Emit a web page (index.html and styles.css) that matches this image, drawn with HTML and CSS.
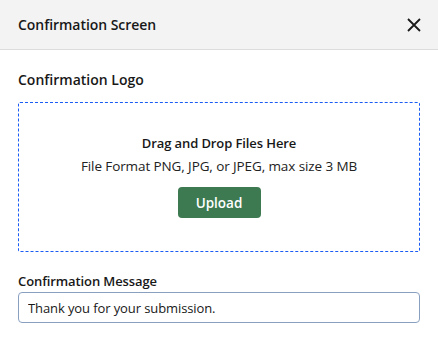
FILE: index.html
```html
<!DOCTYPE html>
<html>
<head>
<meta charset="utf-8">
<link rel="stylesheet" href="styles.css">
</head>
<body>
<div class="modal">
  <header class="header">
    <h1 class="title">Confirmation Screen</h1>
    <button class="close" aria-label="Close">
      <svg width="14" height="14" viewBox="0 0 14 14"><path d="M1 1L13 13M13 1L1 13" stroke="#1a1a1a" stroke-width="1.8" fill="none"/></svg>
    </button>
  </header>
  <main class="body">
    <div class="label logo-label">Confirmation Logo</div>
    <div class="dropzone">
      <div class="drop-title">Drag and Drop Files Here</div>
      <div class="drop-sub">File Format PNG, JPG, or JPEG, max size 3 MB</div>
      <button class="upload">Upload</button>
    </div>
    <div class="label msg-label">Confirmation Message</div>
    <input class="input" type="text" value="Thank you for your submission.">
  </main>
</div>
</body>
</html>
```
FILE: styles.css
```css
* { box-sizing: border-box; }
html, body { margin: 0; padding: 0; background: #fff; }
body { font-family: "Open Sans", "Noto Sans", sans-serif; color: #181818; width: 438px; height: 357px; overflow: hidden; }
.header {
  height: 50px;
  background: #f3f3f3;
  border-bottom: 1px solid #dcdcdc;
  display: flex;
  align-items: center;
  justify-content: space-between;
  padding: 0 17px 0 18px;
}
.title { margin: 0; font-size: 14px; font-weight: 600; letter-spacing: -0.05px; }
.close { border: 0; background: none; padding: 0; width: 14px; height: 14px; display: flex; }
.body { padding: 0 18px; display: flex; flex-direction: column; }
.label { font-weight: 600; }
.logo-label { margin-top: 19px; line-height: 22px; font-size: 14px; letter-spacing: 0; }
.msg-label { margin-top: 20px; line-height: 18px; font-size: 13px; letter-spacing: -0.1px; }
.dropzone {
  margin-top: 11px;
  height: 150px;
  border: 1px dashed #1b5cf5;
  border-radius: 2px;
  display: flex;
  flex-direction: column;
  align-items: center;
  padding-top: 31px;
}
.drop-title { font-size: 13px; font-weight: 600; line-height: 18px; letter-spacing: -0.1px; }
.drop-sub { font-size: 13.5px; margin-top: 5px; line-height: 18px; letter-spacing: -0.1px; color: #222; }
.upload {
  margin-top: 12px;
  width: 83px; height: 31px;
  border: 0; border-radius: 4px;
  background: #3d7a51; color: #fff;
  font-family: inherit; font-size: 13.5px; font-weight: 600;
}
.input {
  margin-top: 2px;
  height: 31px;
  border: 1px solid #8aa0c0;
  border-radius: 4px;
  padding: 0 9px;
  font-family: inherit; font-size: 13px; color: #181818;
  letter-spacing: -0.1px;
}
```
